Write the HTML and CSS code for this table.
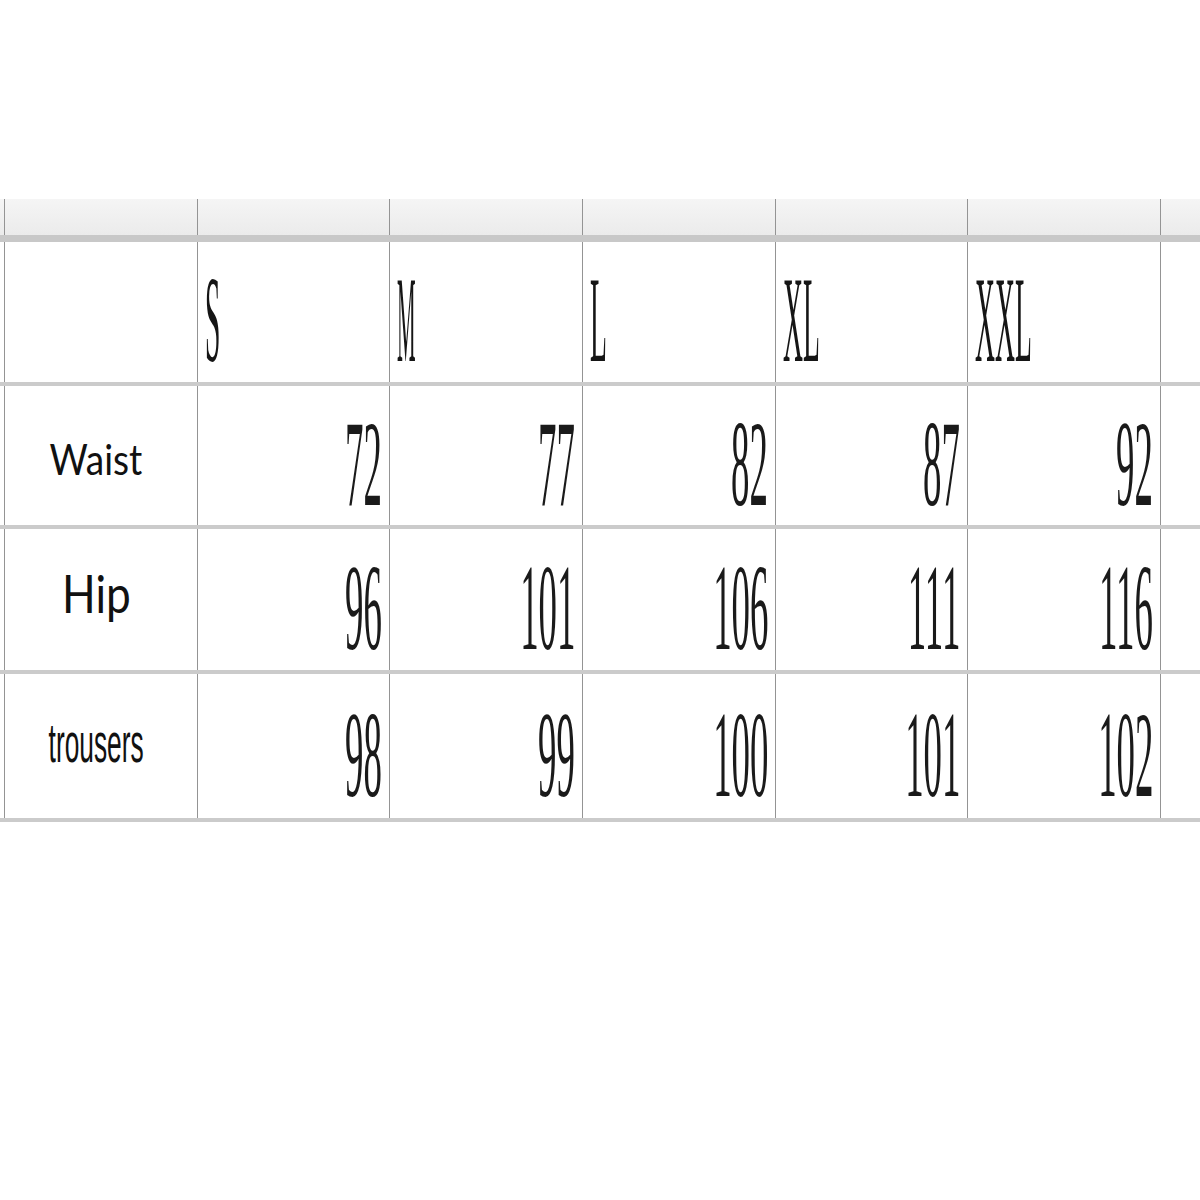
FILE: index.html
```html
<!DOCTYPE html>
<html>
<head>
<meta charset="utf-8">
<title>Size chart</title>
<link rel="stylesheet" href="styles.css">
</head>
<body>
<div class="sheet">
  <div class="row band">
    <div class="gap"></div>
    <div class="cell"></div><div class="cell"></div><div class="cell"></div><div class="cell"></div><div class="cell"></div><div class="cell"></div><div class="cell"></div>
  </div>
  <div class="row r1">
    <div class="gap"></div>
    <div class="cell"></div>
    <div class="cell size"><span class="glyph">S</span></div>
    <div class="cell size"><span class="glyph narrow">M</span></div>
    <div class="cell size"><span class="glyph">L</span></div>
    <div class="cell size"><span class="glyph">XL</span></div>
    <div class="cell size"><span class="glyph">XXL</span></div>
    <div class="cell"></div>
  </div>
  <div class="row r2">
    <div class="gap"></div>
    <div class="cell label"><span class="waist">Waist</span></div>
    <div class="cell num"><span class="digits">72</span></div>
    <div class="cell num"><span class="digits">77</span></div>
    <div class="cell num"><span class="digits">82</span></div>
    <div class="cell num"><span class="digits">87</span></div>
    <div class="cell num"><span class="digits">92</span></div>
    <div class="cell"></div>
  </div>
  <div class="row r3">
    <div class="gap"></div>
    <div class="cell label"><span class="hip">Hip</span></div>
    <div class="cell num"><span class="digits">96</span></div>
    <div class="cell num"><span class="digits">101</span></div>
    <div class="cell num"><span class="digits">106</span></div>
    <div class="cell num"><span class="digits">111</span></div>
    <div class="cell num"><span class="digits">116</span></div>
    <div class="cell"></div>
  </div>
  <div class="row r4">
    <div class="gap"></div>
    <div class="cell label"><span class="trousers">trousers</span></div>
    <div class="cell num"><span class="digits">98</span></div>
    <div class="cell num"><span class="digits">99</span></div>
    <div class="cell num"><span class="digits">100</span></div>
    <div class="cell num"><span class="digits">101</span></div>
    <div class="cell num"><span class="digits">102</span></div>
    <div class="cell"></div>
  </div>
</div>
</body>
</html>
```

FILE: styles.css
```css
* { box-sizing: border-box; }

html, body {
  margin: 0;
  padding: 0;
  background: #ffffff;
  overflow: hidden;
}

body {
  width: 1200px;
  height: 1200px;
  color: #111111;
}

.sheet {
  padding-top: 199px;
  width: 1200px;
}

.row {
  display: grid;
  grid-template-columns: 4px 193px 192px 193px 193px 192px 193px 1fr;
  border-bottom: 4px solid #cbcbcb;
}

.band {
  height: 43px;
  background: linear-gradient(#f5f5f5, #ebebeb);
  border-bottom: 7px solid #c8c8c8;
}

.r1 { height: 144px; }
.r2 { height: 143px; }
.r3 { height: 145px; }
.r4 { height: 148px; }

.cell {
  border-left: 1px solid #949494;
  display: flex;
  align-items: center;
  min-width: 0;
  white-space: nowrap;
}

.size {
  justify-content: flex-start;
  padding-left: 7px;
  padding-top: 14px;
}

.glyph {
  display: inline-block;
  font-family: "Liberation Serif", "Times New Roman", serif;
  font-size: 123px;
  line-height: 1;
  color: #151515;
  transform: scaleX(0.225);
  transform-origin: left center;
}

.glyph.narrow {
  transform: scaleX(0.17);
}

.num {
  justify-content: flex-end;
  padding-right: 7px;
  padding-top: 16px;
}

.digits {
  display: inline-block;
  font-family: "Liberation Serif", "Times New Roman", serif;
  font-size: 123px;
  line-height: 1;
  color: #1a1a1a;
  transform: scaleX(0.3);
  transform-origin: right center;
}

.label {
  justify-content: center;
  padding-right: 10px;
}

.waist {
  display: inline-block;
  font-family: Lato, "Open Sans", sans-serif;
  font-size: 43px;
  line-height: 1;
  padding-top: 6px;
  transform: scaleX(0.86);
}

.hip {
  display: inline-block;
  font-family: Lato, "Open Sans", sans-serif;
  font-size: 52px;
  line-height: 1;
  padding-bottom: 14px;
  transform: scaleX(0.85);
}

.trousers {
  display: inline-block;
  font-family: "Liberation Sans", Arial, sans-serif;
  font-size: 56px;
  line-height: 1;
  transform: scaleX(0.47);
  transform-origin: center center;
  padding-bottom: 6px;
}
```
